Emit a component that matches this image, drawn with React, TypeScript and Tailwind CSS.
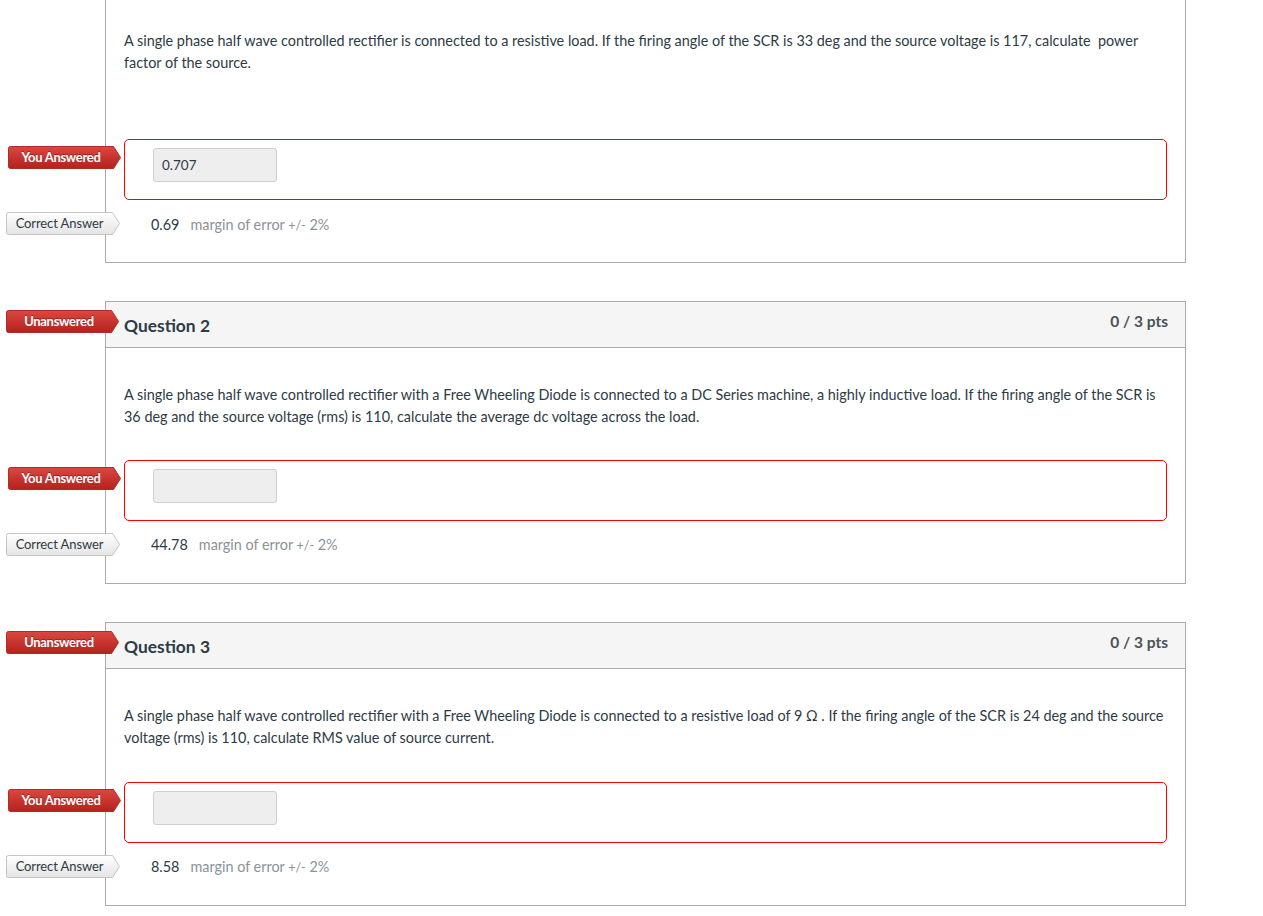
import React from "react";

type Variant = "red" | "gray";

function Badge({ label, variant, className }: { label: string; variant: Variant; className: string }) {
  const id = variant === "red" ? "gradRed" : "gradGray";
  return (
    <div className={`absolute h-[23px] ${className}`}>
      <svg className="absolute inset-0 h-full w-full" viewBox="0 0 114 23" preserveAspectRatio="none">
        <defs>
          <linearGradient id="gradRed" x1="0" y1="0" x2="0" y2="1">
            <stop offset="0" stopColor="#dc4740" />
            <stop offset="1" stopColor="#b3221e" />
          </linearGradient>
          <linearGradient id="gradGray" x1="0" y1="0" x2="0" y2="1">
            <stop offset="0" stopColor="#ffffff" />
            <stop offset="1" stopColor="#e4e4e4" />
          </linearGradient>
        </defs>
        <path
          d="M2.5 0.5 H106.5 L113.5 11.5 L106.5 22.5 H2.5 Q0.5 22.5 0.5 20.5 V2.5 Q0.5 0.5 2.5 0.5 Z"
          fill={`url(#${id})`}
          stroke={variant === "red" ? "#b02a25" : "#c4c4c4"}
          strokeWidth="1"
        />
      </svg>
      <span
        className={
          variant === "red"
            ? "absolute inset-y-0 left-0 right-[7px] flex items-center justify-center text-[13px] font-bold tracking-[-0.3px] text-white [text-shadow:0_-1px_0_rgba(0,0,0,0.35)]"
            : "absolute inset-y-0 left-0 right-[7px] flex items-center justify-center text-[13px] tracking-[-0.1px] text-[#2d3b45]"
        }
      >
        {label}
      </span>
    </div>
  );
}

function Question({
  num,
  text,
  answer,
  correct,
  first,
  gapClass,
}: {
  num: number;
  text: React.ReactNode;
  answer: string;
  correct: string;
  first?: boolean;
  gapClass: string;
}) {
  return (
    <div className={`relative border border-[#aaaaaa] bg-white ${first ? "-mt-[53px]" : ""} mb-[38px]`}>
      <Badge label="Unanswered" variant="red" className="left-[-100px] top-[8px] w-[113px]" />
      <div className="flex h-[46px] items-start justify-between border-b border-[#aaaaaa] bg-[#f5f5f5] pl-[18px] pr-[17px]">
        <div className="pt-[12px] text-[17.4px] font-bold leading-[24px] text-[#2d3b45]">Question {num}</div>
        <div className="pt-[9px] text-[15.5px] font-bold leading-[20px] text-[#4a5158]">0 / 3 pts</div>
      </div>
      <div className="pb-[24px] pt-[36px]">
        <div className="px-[18px] text-[14.4px] leading-[21.7px] text-[#2d3b45]">{text}</div>
        <div className={`relative ${gapClass}`}>
          <Badge label="You Answered" variant="red" className="left-[-98px] top-[7px] w-[113px]" />
          <div className="mx-[18px] h-[61px] rounded-[5px] border border-[#ff0000] pl-[28px] pt-[8px]">
            <div className="flex h-[34px] w-[124px] items-center rounded-[3px] border border-[#cfcfcf] bg-[#eeeeee] pl-[8px] text-[13.5px] text-[#2d3b45]">
              {answer}
            </div>
          </div>
        </div>
        <div className="relative mt-[10px] flex h-[28px] items-center">
          <Badge label="Correct Answer" variant="gray" className="left-[-100px] top-[2px] w-[114px]" />
          <div className="flex items-baseline pl-[45px] text-[14.4px] text-[#2d3b45]">
            <span>{correct}</span>
            <span className="ml-[11px] text-[#8b9298]">
              margin of error <span className="text-[12.5px]">+/-</span> 2%
            </span>
          </div>
        </div>
      </div>
    </div>
  );
}

export default function App() {
  return (
    <div className="min-h-screen overflow-hidden bg-white font-[Lato,sans-serif]">
      <div className="ml-[105px] w-[1081px]">
        <Question
          first
          num={1}
          gapClass="mt-[66px]"
          text={
            <>
              A single phase half wave controlled rectifier is connected to a resistive load. If the firing angle of the SCR is 33 deg and the source voltage is 117, calculate&nbsp; power factor of the source.
            </>
          }
          answer="0.707"
          correct="0.69"
        />
        <Question
          num={2}
          gapClass="mt-[32px]"
          text={
            <>
              A single phase half wave controlled rectifier with a Free Wheeling Diode is connected to a DC Series machine, a highly inductive load. If the firing angle of the SCR is 36 deg and the source voltage (rms) is 110, calculate the average dc voltage across the load.
            </>
          }
          answer=""
          correct="44.78"
        />
        <Question
          num={3}
          gapClass="mt-[34px]"
          text={
            <>
              A single phase half wave controlled rectifier with a Free Wheeling Diode is connected to a resistive load of 9 Ω . If the firing angle of the SCR is 24 deg and the source voltage (rms) is 110, calculate RMS value of source current.
            </>
          }
          answer=""
          correct="8.58"
        />
      </div>
    </div>
  );
}
